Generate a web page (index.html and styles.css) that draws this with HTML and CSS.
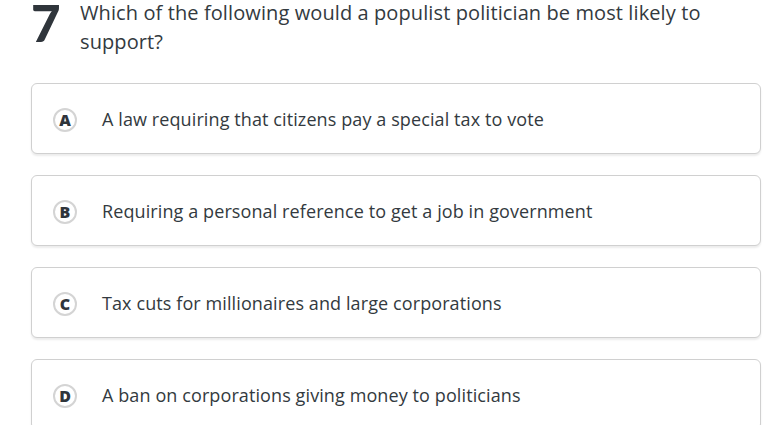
FILE: index.html
```html
<!DOCTYPE html>
<html>
<head>
<meta charset="utf-8">
<link rel="stylesheet" href="styles.css">
</head>
<body>
<div class="question">
  <div class="qhead">
    <div class="qnum">7</div>
    <div class="qtext">Which of the following would a populist politician be most likely to support?</div>
  </div>
  <div class="options">
    <div class="option"><span class="letter">A</span><span class="otext">A law requiring that citizens pay a special tax to vote</span></div>
    <div class="option"><span class="letter">B</span><span class="otext">Requiring a personal reference to get a job in government</span></div>
    <div class="option"><span class="letter">C</span><span class="otext">Tax cuts for millionaires and large corporations</span></div>
    <div class="option"><span class="letter">D</span><span class="otext">A ban on corporations giving money to politicians</span></div>
  </div>
</div>
</body>
</html>
```
FILE: styles.css
```css
html, body {
  margin: 0;
  padding: 0;
  background: #ffffff;
}
body {
  font-family: "Open Sans", "Liberation Sans", sans-serif;
  color: #333a40;
  overflow: hidden;
}
.question {
  padding: 2px 9px 0 31px;
}
.qhead {
  display: flex;
  align-items: flex-start;
}
.qnum {
  width: 49px;
  font-family: "Lato", "Open Sans", sans-serif;
  font-weight: 900;
  font-size: 51px;
  line-height: 40px;
  padding-top: 1px;
  color: #2f353b;
}
.qtext {
  font-size: 20px;
  line-height: 29px;
  letter-spacing: 0.1px;
  margin-top: -4px;
  width: 660px;
  color: #333a40;
}
.options {
  margin-top: 27px;
  display: flex;
  flex-direction: column;
  gap: 21px;
}
.option {
  height: 69px;
  border: 1px solid #d0d0d0;
  border-radius: 6px;
  box-shadow: 0 2px 2px rgba(0,0,0,0.08);
  display: flex;
  align-items: center;
  padding-left: 21px;
  background: #fff;
}
.letter {
  width: 20px;
  height: 20px;
  border: 2px solid #d4d4d4;
  border-radius: 50%;
  display: flex;
  align-items: center;
  justify-content: center;
  font-family: "Open Sans", sans-serif;
  font-weight: 800;
  font-size: 16px;
  line-height: 20px;
  color: #2f353b;
  margin-right: 25px;
  margin-top: 2px;
  flex-shrink: 0;
}
.otext {
  font-size: 18px;
  letter-spacing: 0.1px;
  color: #333a40;
}
```
